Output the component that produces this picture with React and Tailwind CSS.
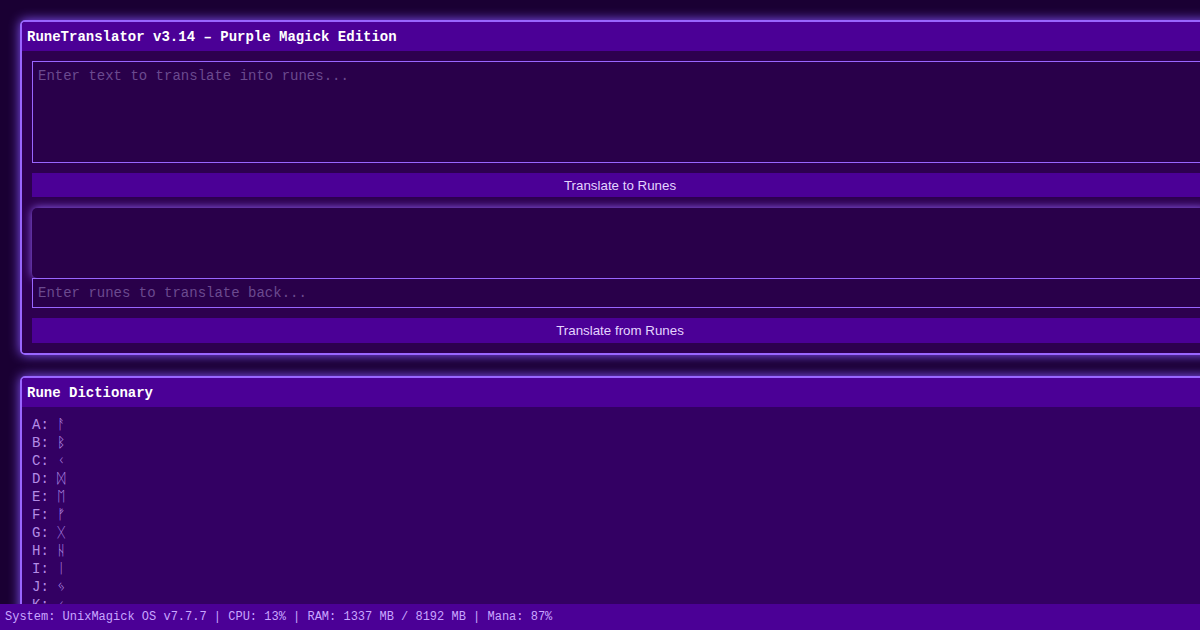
const runes = [
  ["A", "ᚨ"],
  ["B", "ᛒ"],
  ["C", "ᚲ"],
  ["D", "ᛞ"],
  ["E", "ᛖ"],
  ["F", "ᚠ"],
  ["G", "ᚷ"],
  ["H", "ᚺ"],
  ["I", "ᛁ"],
  ["J", "ᛃ"],
  ["K", "ᚲ"],
  ["L", "ᛚ"],
  ["M", "ᛗ"],
];

function Panel({ title, bodyClass, children }) {
  return (
    <div className="w-[1200px] ml-[20px] border-2 border-[#9966ff] rounded-[5px] shadow-[0_0_12px_#8855ff] overflow-hidden">
      <div className="bg-[#4b0096] h-[29px] pt-[1px] px-[5px] flex items-center text-white font-bold text-[14px]">
        {title}
      </div>
      <div className={`p-[10px] ${bodyClass}`}>{children}</div>
    </div>
  );
}

export default function App() {
  return (
    <div className="h-[630px] w-[1200px] overflow-hidden bg-[#1a0033] font-['Nimbus_Mono_PS','Courier_New',Courier,'Liberation_Mono',monospace] text-[#c9a6ff] relative">
      <div className="pt-[20px] flex flex-col gap-[21px]">
        <Panel title="RuneTranslator v3.14 – Purple Magick Edition" bodyClass="bg-[#2d004f]">
          <textarea
            placeholder="Enter text to translate into runes..."
            className="block w-full h-[102px] resize-none bg-[#29004a] border border-[#9966ff] px-[5px] py-[4px] text-[14px] placeholder:text-[#6b4a8f] outline-none"
          />
          <button className="block w-full h-[24px] mt-[10px] pt-[1px] bg-[#4b0096] text-[#e4d4ff] text-[13.33px] font-['Liberation_Sans',Arial,sans-serif]">
            Translate to Runes
          </button>
          <div className="h-[70px] mt-[11px] bg-[#29004a] rounded-[5px] shadow-[0_0_10px_#9966ff]" />
          <input
            placeholder="Enter runes to translate back..."
            className="relative block w-full h-[30px] bg-[#29004a] border border-[#9966ff] px-[5px] text-[14px] placeholder:text-[#6b4a8f] outline-none"
          />
          <button className="block w-full h-[25px] mt-[10px] bg-[#4b0096] text-[#e4d4ff] text-[13.33px] font-['Liberation_Sans',Arial,sans-serif]">
            Translate from Runes
          </button>
        </Panel>
        <Panel title="Rune Dictionary" bodyClass="bg-[#330063] h-[400px]">
          <div className="-mt-[1px]">
            {runes.map(([l, r]) => (
              <div key={l} className="h-[18px] leading-[18px] text-[14px] text-[#b48ce6]">
                {l}: <span className="text-[#b48ce6]">{r}</span>
              </div>
            ))}
          </div>
        </Panel>
      </div>
      <div className="absolute left-0 bottom-0 w-full h-[26px] bg-[#4b0096] px-[5px] flex items-center text-[12px] text-[#c9a6ff]">
        System: UnixMagick OS v7.7.7 | CPU: 13% | RAM: 1337 MB / 8192 MB | Mana: 87%
      </div>
    </div>
  );
}
